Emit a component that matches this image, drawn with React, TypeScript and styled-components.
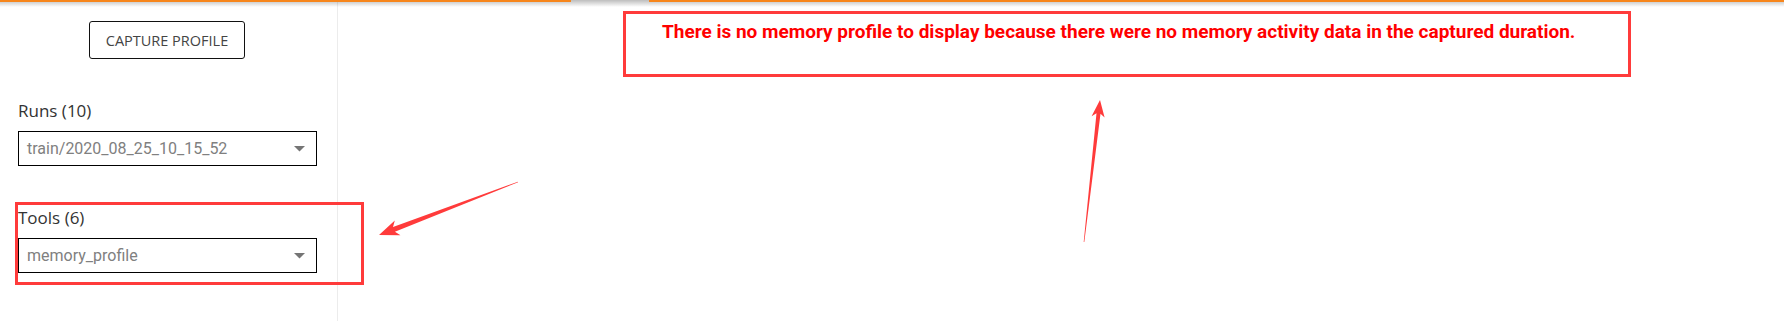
import React from 'react'
import styled, { createGlobalStyle } from 'styled-components'

const red = '#ff3b3b'
const orange = '#f7861c'

const GlobalStyle = createGlobalStyle`
    html, body {
        margin: 0;
        padding: 0;
        background: #fff;
    }
    * {
        box-sizing: border-box;
    }
`

type Point = [number, number]

// tapered screenshot-tool arrow, thin at the tail and wide at the head
const arrowPoints = (tail: Point, tip: Point, headLen: number, headHalf: number, shaftHalf: number) => {
    const dx = tip[0] - tail[0]
    const dy = tip[1] - tail[1]
    const len = Math.hypot(dx, dy)
    const ux = dx / len
    const uy = dy / len
    const nx = -uy
    const ny = ux
    const base: Point = [tip[0] - ux * headLen, tip[1] - uy * headLen]
    const neck: Point = [tip[0] - ux * headLen * 0.8, tip[1] - uy * headLen * 0.8]
    const pts: Point[] = [
        [tail[0] + nx * 0.3, tail[1] + ny * 0.3],
        [neck[0] + nx * shaftHalf, neck[1] + ny * shaftHalf],
        [base[0] + nx * headHalf, base[1] + ny * headHalf],
        tip,
        [base[0] - nx * headHalf, base[1] - ny * headHalf],
        [neck[0] - nx * shaftHalf, neck[1] - ny * shaftHalf],
        [tail[0] - nx * 0.3, tail[1] - ny * 0.3],
    ]
    return pts.map(p => `${p[0].toFixed(1)},${p[1].toFixed(1)}`).join(' ')
}

const runs = { label: 'Runs (10)', value: 'train/2020_08_25_10_15_52' }
const tools = { label: 'Tools (6)', value: 'memory_profile' }

const Dropdown = ({ value }: { value: string }) => (
    <Select>
        <SelectValue>{value}</SelectValue>
        <svg width="11" height="6" viewBox="0 0 11 6">
            <polygon points="0,0 11,0 5.5,5.5" fill="#757575" />
        </svg>
    </Select>
)

export default function App() {
    return (
        <Page>
            <GlobalStyle />
            <TopBar>
                <TopSegment />
                <TopGap />
                <TopSegment grow />
            </TopBar>
            <Body>
                <Sidebar>
                    <CaptureButton>CAPTURE PROFILE</CaptureButton>
                    <Field>
                        <Label>{runs.label}</Label>
                        <Dropdown value={runs.value} />
                    </Field>
                    <Field>
                        <Label>{tools.label}</Label>
                        <Dropdown value={tools.value} />
                    </Field>
                </Sidebar>
                <Main>
                    <Message>
                        There is no memory profile to display because there were no memory activity data in the
                        captured duration.
                    </Message>
                </Main>
            </Body>

            <Mark style={{ left: 623, top: 11, width: 1008, height: 66 }} />
            <Mark style={{ left: 15, top: 202, width: 349, height: 83 }} />
            <Arrows width="1784" height="321" viewBox="0 0 1784 321">
                <polygon points={arrowPoints([518, 182], [379, 235], 20, 8, 2.6)} fill={red} />
                <polygon points={arrowPoints([1084, 242], [1100, 100], 17, 6.5, 2)} fill={red} />
            </Arrows>
        </Page>
    )
}

const Page = styled.div`
    position: relative;
    width: 1784px;
    height: 321px;
    overflow: hidden;
    background: #fff;
`

const TopBar = styled.div`
    position: relative;
    display: flex;
    height: 2px;
    z-index: 1;

    &::after {
        content: '';
        position: absolute;
        left: 0;
        right: 0;
        top: 0;
        height: 7px;
        background: linear-gradient(rgba(0, 0, 0, 0.26), rgba(0, 0, 0, 0));
        pointer-events: none;
        z-index: 0;
    }
`

const TopSegment = styled.div<{ grow?: boolean }>`
    position: relative;
    z-index: 1;
    height: 2px;
    background: ${orange};
    ${props => (props.grow ? 'flex: 1;' : 'width: 571px;')}
`

const TopGap = styled.div`
    width: 78px;
    height: 2px;
`

const Body = styled.div`
    display: flex;
    height: 319px;
`

const Sidebar = styled.aside`
    width: 338px;
    flex-shrink: 0;
    border-right: 1px solid #ececec;
    padding: 19px 0 0 18px;
    display: flex;
    flex-direction: column;
    align-items: flex-start;
`

const CaptureButton = styled.button`
    margin-left: 71px;
    width: 156px;
    height: 38px;
    border: 1px solid #111;
    border-radius: 3px;
    background: #fff;
    color: #444;
    font-family: 'Open Sans', 'Noto Sans', sans-serif;
    font-size: 14.5px;
    padding: 0;
    cursor: pointer;
`

const Field = styled.div`
    margin-top: 40px;
    display: flex;
    flex-direction: column;
    gap: 8px;
`

const Label = styled.div`
    font-family: 'Open Sans', 'Noto Sans', sans-serif;
    font-size: 17px;
    line-height: 24px;
    color: #333;
`

const Select = styled.div`
    width: 299px;
    height: 35px;
    border: 1px solid #000;
    display: flex;
    align-items: center;
    justify-content: space-between;
    padding: 0 11px 0 8px;
`

const SelectValue = styled.span`
    font-family: Roboto, 'Liberation Sans', sans-serif;
    font-size: 16px;
    color: #808080;
`

const Main = styled.main`
    flex: 1;
    padding: 18px 0 0 324px;
`

const Message = styled.div`
    font-family: Roboto, 'Liberation Sans', sans-serif;
    font-weight: 700;
    font-size: 19px;
    line-height: 24px;
    color: #ff0000;
    white-space: nowrap;
`

const Mark = styled.div`
    position: absolute;
    border: 3px solid ${red};
    pointer-events: none;
`

const Arrows = styled.svg`
    position: absolute;
    left: 0;
    top: 0;
    pointer-events: none;
`
